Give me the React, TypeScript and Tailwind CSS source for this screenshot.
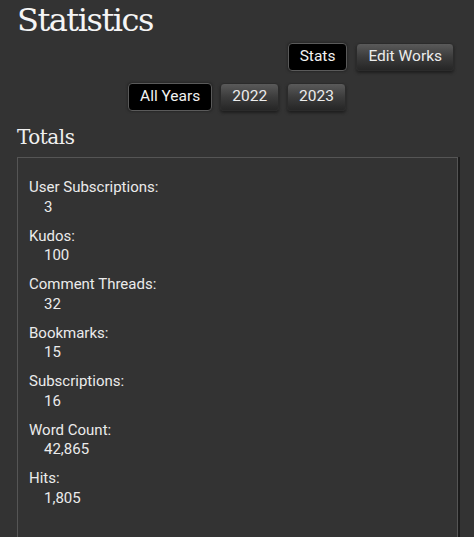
const stats = [
  { label: "User Subscriptions", value: "3" },
  { label: "Kudos", value: "100" },
  { label: "Comment Threads", value: "32" },
  { label: "Bookmarks", value: "15" },
  { label: "Subscriptions", value: "16" },
  { label: "Word Count", value: "42,865" },
  { label: "Hits", value: "1,805" },
];

const Btn = ({ label, active }: { label: string; active?: boolean }) => (
  <span
    className={
      active
        ? "inline-flex items-center h-[28px] px-[11px] rounded-[4px] bg-black border border-[#5a5a5a] text-[#f2f2f2] text-[15.5px] shadow-[0_0_3px_#1a1a1a]"
        : "inline-flex items-center h-[28px] px-[11px] rounded-[4px] bg-gradient-to-b from-[#5a5a5a] via-[#3c3c3c] to-[#262626] border border-[#2b2b2b] text-[#ececec] text-[15.5px] shadow-[0_2px_3px_#1e1e1e]"
    }
  >
    {label}
  </span>
);

export default function App() {
  return (
    <div
      className="min-h-[537px] bg-[#333333] text-[#ebebeb] px-[17px] overflow-hidden"
      style={{ fontFamily: "Roboto, 'Liberation Sans', sans-serif" }}
    >
      <h1 className="text-[32px] leading-[40px] pt-[0px] text-[#f5f5f5] font-['DejaVu_Serif',serif] tracking-[-1.5px]">
        Statistics
      </h1>
      <div className="flex justify-end gap-[9px] mt-[3px] mr-[3px]">
        <Btn label="Stats" active />
        <Btn label="Edit Works" />
      </div>
      <div className="flex justify-center gap-[8px] mt-[12px]">
        <Btn label="All Years" active />
        <Btn label="2022" />
        <Btn label="2023" />
      </div>
      <h2 className="mt-[13px] text-[20px] leading-[26px] text-[#f0f0f0] font-['DejaVu_Serif',serif] tracking-[-0.5px]">
        Totals
      </h2>
      <div className="mt-[7px] w-[441px] border border-[#555555] shadow-[2px_0_0_#1c1c1c] pl-[11px] pt-[20px] pb-[40px] flex flex-col gap-[9.5px]">
        {stats.map((s) => (
          <div key={s.label} className="text-[15px] leading-[19.5px]">
            <div>{s.label}:</div>
            <div className="pl-[15px]">{s.value}</div>
          </div>
        ))}
      </div>
    </div>
  );
}
